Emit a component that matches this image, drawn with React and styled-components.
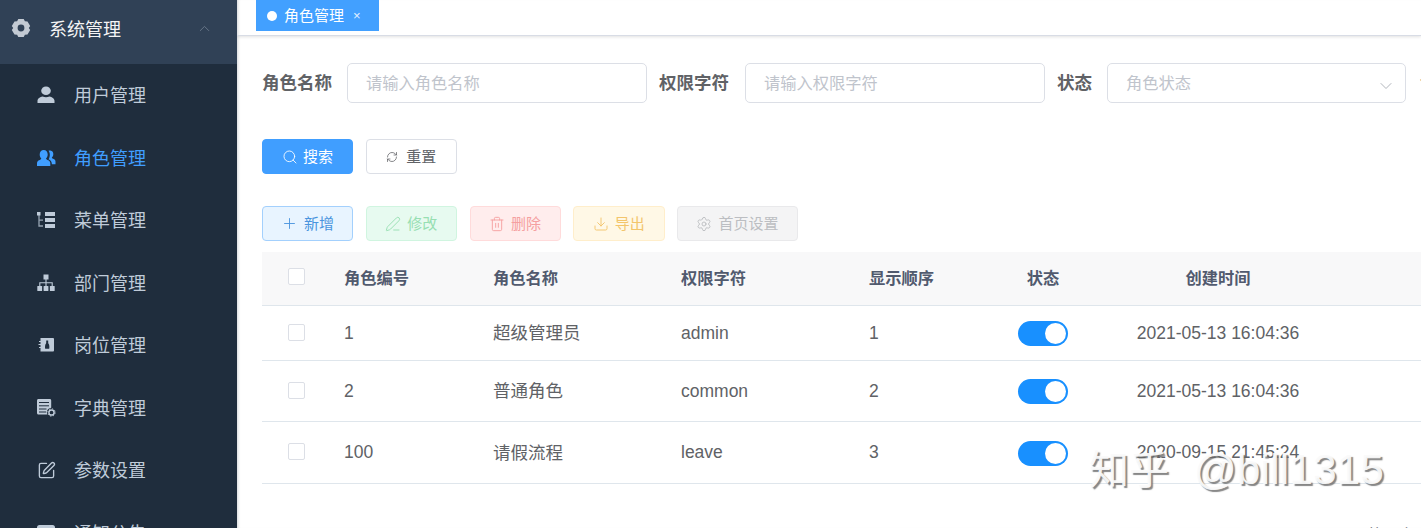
import React from 'react';
import styled, { createGlobalStyle } from 'styled-components';
import {
  ChevronDown,
  ChevronUp,
  Download,
  PenLine,
  Plus,
  RefreshCw,
  Search,
  Settings,
  SquarePen,
  Trash2,
} from 'lucide-react';

const FONT = `"Liberation Sans", "Noto Sans CJK SC", sans-serif`;

const GlobalStyle = createGlobalStyle`
  html, body {
    margin: 0;
    padding: 0;
    height: 100%;
    overflow: hidden;
    background: #fff;
    font-family: ${FONT};
  }
  * { box-sizing: border-box; }
`;

function GearIcon() {
  return (
    <svg width="20" height="20" viewBox="0 0 20 20">
      <path
        fill="currentColor"
        fillRule="evenodd"
        d="M7.3 1h5.4l1.2 2.3 2.6.1 2.7 4.5-1.4 2.1 1.4 2.1-2.7 4.5-2.6.1L12.700 19H7.300l-1.200-2.300-2.600-.1L.8 12.100 2.200 10 .8 7.900l2.700-4.500 2.600-.1L7.300 1zM10 6.600a3.400 3.400 0 1 0 0 6.800 3.400 3.400 0 0 0 0-6.800z"
      />
    </svg>
  );
}

function UserIcon() {
  return (
    <svg width="18" height="18" viewBox="0 0 18 18">
      <ellipse cx="9" cy="4.800" rx="4.800" ry="4.300" fill="currentColor" />
      <path fill="currentColor" d="M.5 17v-2.200c0-2.500 2.600-3.700 5-4.300 2.300 1 4.700 1 7 0 2.400.6 5 1.800 5 4.300V17z" />
    </svg>
  );
}

function PeoplesIcon() {
  return (
    <svg width="19" height="18" viewBox="0 0 19 18">
      <path fill="currentColor" d="M13.300 1.500c2.200.2 3.200 2 3 3.900-.1 1.400-.7 2.500-1.500 3.100.2.800 1 1.100 2 1.600 1 .5 1.700 1.300 1.700 2.700v2.500h-3.600c0-2.800-1.500-4-3.300-5 .8-1.200 1.300-2.900 1.200-4.700 0-1.500-.5-3-1.300-3.900.6-.2 1.200-.3 1.800-.2z" />
      <path fill="currentColor" d="M6.700 1c2.500 0 4 1.900 4 4.400 0 1.700-.7 3.200-1.700 4 .2.900 1.100 1.300 2.300 1.900 1.200.6 2 1.500 2 3.100V17H0v-2.600c0-1.600.8-2.500 2-3.100 1.200-.6 2.100-1 2.300-1.900-1-.8-1.600-2.300-1.600-4C2.700 2.900 4.200 1 6.700 1z" />
    </svg>
  );
}

function TreeTableIcon() {
  return (
    <svg width="18" height="18" viewBox="0 0 18 18">
      <rect x="0" y="1" width="3.500" height="3.500" fill="currentColor" />
      <path d="M2 4v11h4M2 9.200h4" fill="none" stroke="currentColor" strokeWidth="1.300" opacity=".75" />
      <rect x="8" y="1" width="10" height="4" fill="currentColor" />
      <rect x="8" y="7" width="10" height="4" fill="currentColor" />
      <rect x="8" y="13" width="10" height="4" fill="currentColor" />
    </svg>
  );
}

function TreeIcon() {
  return (
    <svg width="18" height="18" viewBox="0 0 18 18">
      <rect x="6.500" y="0.500" width="5" height="5" fill="currentColor" />
      <path d="M9 5v4M2.800 12V8.700h12.400V12M9 8.700V12" fill="none" stroke="currentColor" strokeWidth="1.100" />
      <rect x="0.300" y="12" width="4.800" height="5" rx=".5" fill="currentColor" />
      <rect x="6.600" y="12" width="4.800" height="5" rx=".5" fill="currentColor" />
      <rect x="12.900" y="12" width="4.800" height="5" rx=".5" fill="currentColor" />
    </svg>
  );
}

function PostIcon() {
  return (
    <svg width="18" height="18" viewBox="0 0 18 18">
      <path
        fill="currentColor"
        fillRule="evenodd"
        d="M3.500 2h12.600a.9.900 0 0 1 .9.900v11.700a.9.900 0 0 1-.9.900H3.500V12H2v-1h1.500V9H1.500V8h2V6H2V5h1.500V2zM9.200 4.500v2.200c0 .8-.5 1-.8 1.700-.4 1-.5 3.300-.2 4.300h4c.3-1 .2-3.300-.2-4.300-.3-.7-.8-.9-.8-1.700V4.500H9.200z"
      />
    </svg>
  );
}

function DictIcon() {
  return (
    <svg width="19" height="18" viewBox="0 0 19 18">
      <path
        fill="currentColor"
        d="M1.500 0h11.200c.9 0 1.500.6 1.500 1.500v7.300a4.700 4.700 0 0 0-4 6.700H1.500c-.9 0-1.500-.6-1.500-1.500v-12C0 .6.600 0 1.500 0z"
      />
      <path d="M2 3.500h10M2 6.800h10M2 10h7.500M2 13h7" stroke="#1f2d3d" strokeWidth="1" />
      <circle cx="14.500" cy="13.500" r="2.600" fill="none" stroke="currentColor" strokeWidth="1.500" />
      <circle cx="14.500" cy="13.500" r="3.700" fill="none" stroke="currentColor" strokeWidth="1" strokeDasharray="1.300 1.600" />
    </svg>
  );
}

function MessageIcon() {
  return (
    <svg width="18" height="18" viewBox="0 0 18 18">
      <rect x="0" y="1" width="18" height="15" rx="2.500" fill="currentColor" />
    </svg>
  );
}

const MENU_ITEMS = [
  { label: '用户管理', icon: <UserIcon /> },
  { label: '角色管理', icon: <PeoplesIcon />, active: true },
  { label: '菜单管理', icon: <TreeTableIcon /> },
  { label: '部门管理', icon: <TreeIcon /> },
  { label: '岗位管理', icon: <PostIcon /> },
  { label: '字典管理', icon: <DictIcon /> },
  { label: '参数设置', icon: <SquarePen size={19} strokeWidth={1.7} /> },
  { label: '通知公告', icon: <MessageIcon /> },
];

const ROLES = [
  { id: '1', name: '超级管理员', key: 'admin', sort: '1', time: '2021-05-13 16:04:36', height: 55 },
  { id: '2', name: '普通角色', key: 'common', sort: '2', time: '2021-05-13 16:04:36', height: 61 },
  { id: '100', name: '请假流程', key: 'leave', sort: '3', time: '2020-09-15 21:45:24', height: 62 },
];

const ACTIONS = [
  { label: '新增', tone: 'primary', icon: <Plus size={17} strokeWidth={1.3} /> },
  { label: '修改', tone: 'success', icon: <PenLine size={16} strokeWidth={1.4} /> },
  { label: '删除', tone: 'danger', icon: <Trash2 size={16} strokeWidth={1.4} /> },
  { label: '导出', tone: 'warning', icon: <Download size={16} strokeWidth={1.4} /> },
  { label: '首页设置', tone: 'muted', wide: true, icon: <Settings size={16} strokeWidth={1.4} /> },
];

export default function App() {
  return (
    <Layout>
      <GlobalStyle />
      <Sidebar>
        <MenuHeader>
          <HeaderIcon>
            <GearIcon />
          </HeaderIcon>
          <HeaderTitle>系统管理</HeaderTitle>
          <HeaderArrow>
            <ChevronUp size={17} strokeWidth={1.2} />
          </HeaderArrow>
        </MenuHeader>
        {MENU_ITEMS.map((item) => (
          <MenuItem key={item.label} $active={item.active}>
            <MenuIcon>{item.icon}</MenuIcon>
            <MenuText>{item.label}</MenuText>
          </MenuItem>
        ))}
      </Sidebar>

      <Main>
        <TabBar>
          <ActiveTab>
            <TabDot />
            <TabText>角色管理</TabText>
            <TabClose>×</TabClose>
          </ActiveTab>
        </TabBar>

        <Content>
          <FormRow>
            <FormLabel $width={85}>角色名称</FormLabel>
            <Field $gap={12}>请输入角色名称</Field>
            <FormLabel $width={86}>权限字符</FormLabel>
            <Field $gap={12}>请输入权限字符</Field>
            <FormLabel $width={50}>状态</FormLabel>
            <Field $width={299} $gap={14}>
              角色状态
              <SelectArrow>
                <ChevronDown size={20} strokeWidth={1.1} />
              </SelectArrow>
            </Field>
            <FormLabel $width={85}>创建时间</FormLabel>
          </FormRow>

          <ButtonRow $top={36}>
            <SearchButton>
              <Search size={16} strokeWidth={1.3} />
              搜索
            </SearchButton>
            <ResetButton>
              <RefreshCw size={12} strokeWidth={1.5} />
              重置
            </ResetButton>
          </ButtonRow>

          <ButtonRow $top={32}>
            {ACTIONS.map((action) => (
              <ToneButton key={action.label} $tone={action.tone} $wide={action.wide}>
                {action.icon}
                {action.label}
              </ToneButton>
            ))}
          </ButtonRow>

          <Table>
            <HeadRow>
              <CheckCell>
                <CheckBox />
              </CheckCell>
              <Cell>角色编号</Cell>
              <Cell>角色名称</Cell>
              <Cell>权限字符</Cell>
              <Cell>显示顺序</Cell>
              <CenterCell>状态</CenterCell>
              <CenterCell>创建时间</CenterCell>
            </HeadRow>
            {ROLES.map((role) => (
              <BodyRow key={role.id} $height={role.height}>
                <CheckCell>
                  <CheckBox />
                </CheckCell>
                <Cell>{role.id}</Cell>
                <NameCell>{role.name}</NameCell>
                <Cell>{role.key}</Cell>
                <Cell>{role.sort}</Cell>
                <CenterCell>
                  <Switch />
                </CenterCell>
                <CenterCell>{role.time}</CenterCell>
              </BodyRow>
            ))}
          </Table>

          <Pagination>共 3 条</Pagination>
        </Content>

        <Watermark>
          知乎
          <WatermarkHandle>@bill1315</WatermarkHandle>
        </Watermark>
      </Main>
    </Layout>
  );
}

const Layout = styled.div`
  display: flex;
  width: 1421px;
  height: 528px;
  overflow: hidden;
  font-family: ${FONT};
`;

const Sidebar = styled.aside`
  flex: 0 0 237px;
  height: 528px;
  overflow: hidden;
  background: #1f2d3d;
`;

const MenuHeader = styled.div`
  display: flex;
  align-items: center;
  height: 64px;
  padding: 0 24px 8px 11px;
  background: #304156;
  color: #f4f4f5;
  font-size: 18px;
`;

const HeaderIcon = styled.span`
  display: flex;
  width: 39px;
  color: #c3cad3;
`;

const HeaderTitle = styled.span`
  flex: 1;
  margin-left: -1px;
`;

const HeaderArrow = styled.span`
  display: flex;
  color: #6f7d8f;
`;

const MenuItem = styled.div`
  display: flex;
  align-items: center;
  height: 62.5px;
  padding-left: 37px;
  font-size: 18px;
  color: ${(props) => (props.$active ? '#409eff' : '#bfcbd9')};
`;

const MenuIcon = styled.span`
  display: flex;
  justify-content: flex-start;
  width: 37px;
`;

const MenuText = styled.span`
  padding-bottom: 2px;
`;

const Main = styled.main`
  position: relative;
  flex: 1;
  min-width: 0;
  height: 528px;
  overflow: hidden;
  box-shadow: inset 3px 0 3px -2px rgba(0, 21, 41, 0.18);
`;

const TabBar = styled.div`
  height: 36px;
  padding-left: 19px;
  border-bottom: 1px solid #d8dce5;
  box-shadow: 0 1px 3px rgba(0, 0, 0, 0.12);
`;

const ActiveTab = styled.div`
  display: inline-flex;
  align-items: center;
  width: 123px;
  height: 31px;
  padding-left: 11px;
  background: #42a0ff;
  color: #fff;
  font-size: 15px;
`;

const TabDot = styled.span`
  width: 10px;
  height: 10px;
  margin-right: 7px;
  border-radius: 50%;
  background: #fff;
`;

const TabText = styled.span`
  padding-bottom: 2px;
`;

const TabClose = styled.span`
  margin-left: 9px;
  font-size: 13px;
  opacity: 0.85;
`;

const Content = styled.div`
  padding: 27px 0 0 25px;
`;

const FormRow = styled.div`
  display: flex;
  align-items: center;
  height: 40px;
  white-space: nowrap;
`;

const FormLabel = styled.label`
  flex: none;
  width: ${(props) => props.$width}px;
  padding-bottom: 3px;
  color: #606266;
  font-size: 17.5px;
  font-weight: 700;
`;

const Field = styled.div`
  position: relative;
  flex: none;
  display: flex;
  align-items: center;
  width: ${(props) => props.$width || 300}px;
  height: 40px;
  margin-right: ${(props) => props.$gap}px;
  padding: 0 0 2px 18px;
  border: 1px solid #dcdfe6;
  border-radius: 5px;
  color: #c0c4cc;
  font-size: 16.25px;
`;

const SelectArrow = styled.span`
  position: absolute;
  right: 9px;
  top: 12px;
  display: flex;
  color: #a9adb5;
`;

const ButtonRow = styled.div`
  display: flex;
  gap: 12.5px;
  margin-top: ${(props) => props.$top}px;
`;

const BaseButton = styled.button`
  display: inline-flex;
  align-items: center;
  justify-content: center;
  gap: 5px;
  width: 91.25px;
  height: 35px;
  padding: 0 0 2px;
  border: 1px solid #dcdfe6;
  border-radius: 4px;
  background: #fff;
  color: #606266;
  font-family: ${FONT};
  font-size: 15px;

  svg {
    margin-top: 2px;
  }
`;

const SearchButton = styled(BaseButton)`
  border-color: #409eff;
  background: #409eff;
  color: #fff;
`;

const ResetButton = styled(BaseButton)`
  gap: 8px;
`;

const TONES = {
  primary: { bg: '#e8f4ff', border: '#a3d0fd', color: '#4a94de' },
  success: { bg: '#e7faf0', border: '#d0f5e0', color: '#97dfb2' },
  danger: { bg: '#ffeded', border: '#ffdbdb', color: '#f5a0a0' },
  warning: { bg: '#fff8e6', border: '#ffeecb', color: '#f3c56c' },
  muted: { bg: '#f4f4f5', border: '#e9e9eb', color: '#bcbec2' },
};

const ToneButton = styled(BaseButton)`
  gap: 6px;
  width: ${(props) => (props.$wide ? '121px' : '91.25px')};
  border-color: ${(props) => TONES[props.$tone].border};
  background: ${(props) => TONES[props.$tone].bg};
  color: ${(props) => TONES[props.$tone].color};
`;

const Table = styled.div`
  margin-top: 11px;
  font-size: 17.5px;
  color: #606266;
`;

const COLUMNS = '66px 149px 188px 188px 127px 126px 224px';

const HeadRow = styled.div`
  display: grid;
  grid-template-columns: ${COLUMNS};
  align-items: center;
  height: 54px;
  padding-bottom: 3px;
  border-bottom: 1px solid #dfe6ec;
  background: #f8f8f9;
  color: #515a6e;
  font-size: 16.25px;
  font-weight: 700;
`;

const BodyRow = styled.div`
  display: grid;
  grid-template-columns: ${COLUMNS};
  align-items: center;
  height: ${(props) => props.$height}px;
  border-bottom: 1px solid #dfe6ec;
`;

const Cell = styled.div`
  padding-left: 16px;
  white-space: nowrap;
`;

const NameCell = styled(Cell)`
  padding-bottom: 3px;
`;

const CenterCell = styled.div`
  display: flex;
  justify-content: center;
  white-space: nowrap;
`;

const CheckCell = styled(CenterCell)`
  padding: 0 0 2px 3px;
`;

const CheckBox = styled.span`
  width: 17px;
  height: 17px;
  border: 1px solid #dcdfe6;
  border-radius: 2px;
  background: #fff;
`;

const Switch = styled.span`
  position: relative;
  display: block;
  width: 50px;
  height: 25px;
  margin-top: 1px;
  border-radius: 13px;
  background: #1890ff;

  &::after {
    content: '';
    position: absolute;
    top: 2px;
    right: 2px;
    width: 21px;
    height: 21px;
    border-radius: 50%;
    background: #fff;
  }
`;

const Pagination = styled.div`
  margin-top: 38px;
  padding-right: 5px;
  text-align: right;
  color: #606266;
  font-size: 16px;
`;

const Watermark = styled.div`
  position: absolute;
  left: 852px;
  top: 442px;
  display: flex;
  gap: 25px;
  color: rgba(250, 250, 250, 0.96);
  font-family: ${FONT};
  font-size: 40px;
  line-height: 56px;
  white-space: nowrap;
  text-shadow: 2px 2px 1px rgba(105, 105, 105, 0.8);
`;

const WatermarkHandle = styled.span`
  font-size: 42px;
  letter-spacing: 0.3px;
`;
